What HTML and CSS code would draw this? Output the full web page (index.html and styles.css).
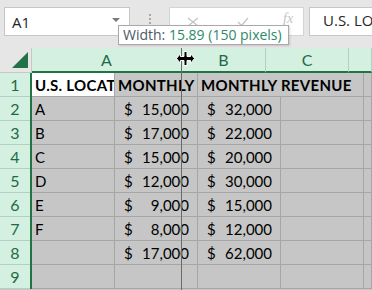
FILE: index.html
```html
<!DOCTYPE html>
<html lang="en">
<head>
    <meta charset="UTF-8">
    <title>Sheet - column width</title>
    <link rel="stylesheet" href="styles.css">
</head>
<body>
    <div class="app">
        <div class="formula-bar">
            <div class="name-box">
                <span>A1</span>
                <span class="caret"></span>
            </div>
            <div class="grip"><i></i><i></i><i></i></div>
            <div class="fx-buttons">
                <svg class="fx-icon" width="12" height="10" viewBox="0 0 12 10"><path d="M1 1 L11 9 M11 1 L1 9" stroke="#c4c4c4" stroke-width="1.3" fill="none"/></svg>
                <svg class="fx-icon" width="12" height="10" viewBox="0 0 12 10"><path d="M1 5 L4.5 8.5 L11 1" stroke="#c4c4c4" stroke-width="1.3" fill="none"/></svg>
                <span class="fx-label">fx</span>
            </div>
            <div class="formula-input">U.S. LOCATION</div>
        </div>

        <div class="col-headers">
            <div class="corner"><span class="corner-tri"></span></div>
            <div class="col-head">A</div>
            <div class="col-head">B</div>
            <div class="col-head">C</div>
            <div class="col-head"></div>
        </div>

        <div class="sheet">
            <div class="row-heads">
                <div class="row-head">1</div>
                <div class="row-head">2</div>
                <div class="row-head">3</div>
                <div class="row-head">4</div>
                <div class="row-head">5</div>
                <div class="row-head">6</div>
                <div class="row-head">7</div>
                <div class="row-head">8</div>
                <div class="row-head">9</div>
            </div>
            <div class="cells">
                <div class="cell active bold">U.S. LOCATION</div>
                <div class="cell bold">MONTHLY PROFIT</div>
                <div class="cell bold wide">MONTHLY REVENUE</div>
                <div class="cell"></div>

                <div class="cell">A</div>
                <div class="cell money"><span>$</span><span>15,000</span></div>
                <div class="cell money"><span>$</span><span>32,000</span></div>
                <div class="cell"></div>
                <div class="cell"></div>

                <div class="cell">B</div>
                <div class="cell money"><span>$</span><span>17,000</span></div>
                <div class="cell money"><span>$</span><span>22,000</span></div>
                <div class="cell"></div>
                <div class="cell"></div>

                <div class="cell">C</div>
                <div class="cell money"><span>$</span><span>15,000</span></div>
                <div class="cell money"><span>$</span><span>20,000</span></div>
                <div class="cell"></div>
                <div class="cell"></div>

                <div class="cell">D</div>
                <div class="cell money"><span>$</span><span>12,000</span></div>
                <div class="cell money"><span>$</span><span>30,000</span></div>
                <div class="cell"></div>
                <div class="cell"></div>

                <div class="cell">E</div>
                <div class="cell money"><span>$</span><span>9,000</span></div>
                <div class="cell money"><span>$</span><span>15,000</span></div>
                <div class="cell"></div>
                <div class="cell"></div>

                <div class="cell">F</div>
                <div class="cell money"><span>$</span><span>8,000</span></div>
                <div class="cell money"><span>$</span><span>12,000</span></div>
                <div class="cell"></div>
                <div class="cell"></div>

                <div class="cell"></div>
                <div class="cell money"><span>$</span><span>17,000</span></div>
                <div class="cell money"><span>$</span><span>62,000</span></div>
                <div class="cell"></div>
                <div class="cell"></div>

                <div class="cell"></div>
                <div class="cell"></div>
                <div class="cell"></div>
                <div class="cell"></div>
                <div class="cell"></div>
            </div>
        </div>

        <!-- column resize overlays -->
        <div class="drag-line"></div>
        <svg class="resize-cursor" width="19" height="15" viewBox="0 0 19 15">
            <path d="M8 0.5 H11 V5.5 H14.5 V2.5 L18.5 7.5 L14.5 12.5 V9.5 H11 V14.5 H8 V9.5 H4.5 V12.5 L0.5 7.5 L4.5 2.5 V5.5 H8 Z" fill="#000" stroke="#fff" stroke-width="1"/>
        </svg>
        <div class="tooltip"><span class="tip-key">Width:</span> <span class="tip-val">15.89 (150 pixels)</span></div>
    </div>
</body>
</html>
```

FILE: styles.css
```css
* {
    margin: 0;
    padding: 0;
    box-sizing: border-box;
}

body {
    width: 372px;
    height: 290px;
    overflow: hidden;
    background: #c6c6c6;
    font-family: 'Lato', 'Open Sans', sans-serif;
}

.app {
    position: relative;
    width: 372px;
    height: 290px;
    overflow: hidden;
}

/* formula bar */
.formula-bar {
    height: 48px;
    background: #e6e6e6;
    display: flex;
    align-items: flex-start;
    padding: 7px 0 0 4px;
    font-family: 'Open Sans', sans-serif;
}

.name-box {
    width: 126px;
    height: 29px;
    background: #fff;
    border: 1px solid #c6c6c6;
    display: flex;
    align-items: center;
    justify-content: space-between;
    padding: 0 9px 0 7px;
    font-size: 15px;
    color: #262626;
}

.caret {
    width: 0;
    height: 0;
    border-left: 4px solid transparent;
    border-right: 4px solid transparent;
    border-top: 4px solid #7a7a7a;
    margin-top: -3px;
}

.grip {
    width: 39px;
    display: flex;
    flex-direction: column;
    align-items: center;
    gap: 2px;
    padding-top: 7px;
}

.grip i {
    width: 2px;
    height: 2px;
    background: #a8a8a8;
}

.fx-buttons {
    width: 135px;
    height: 29px;
    background: #fff;
    border: 1px solid #d4d4d4;
    display: flex;
    align-items: center;
    padding: 0 0 0 17px;
    gap: 38px;
}

.fx-label {
    font-family: 'Liberation Serif', serif;
    font-style: italic;
    font-size: 14px;
    color: #c4c4c4;
    margin-top: -6px;
    margin-left: -4px;
}

.formula-input {
    flex: 1;
    height: 29px;
    margin-left: 5px;
    background: #fff;
    border: 1px solid #c6c6c6;
    border-right: none;
    padding: 2px 0 0 13px;
    font-size: 15px;
    color: #262626;
    white-space: nowrap;
    overflow: hidden;
}

/* column headers */
.col-headers {
    display: grid;
    grid-template-columns: 32px 150px 84px 83px 1fr;
    height: 25px;
}

.corner {
    background: #e6e6e6;
    border-right: 1px solid #c8c8c8;
    border-bottom: 1px solid #c8c8c8;
    position: relative;
}

.corner-tri {
    position: absolute;
    left: 12px;
    top: 4px;
    width: 0;
    height: 0;
    border-left: 16px solid transparent;
    border-bottom: 16px solid #217346;
}

.col-head {
    background: #d3f0e0;
    border-right: 1px solid #b3cfbf;
    border-bottom: 2px solid #217346;
    display: flex;
    align-items: center;
    justify-content: center;
    font-size: 16px;
    color: #1f6a46;
    padding-bottom: 1px;
}

/* grid */
.sheet {
    display: flex;
}

.row-heads {
    width: 32px;
    border-right: 2px solid #217346;
    background: #d3f0e0;
}

.row-head {
    height: 24px;
    border-bottom: 1px solid #b3cfbf;
    display: flex;
    align-items: center;
    justify-content: center;
    font-size: 16px;
    color: #1f6a46;
}

.cells {
    display: grid;
    grid-template-columns: 83px 83px 83px 83px 1fr;
    grid-auto-rows: 24px;
    flex: 1;
}

.cell {
    background: #c6c6c6;
    border-right: 1px solid #a6a6a6;
    border-bottom: 1px solid #a6a6a6;
    font-size: 15px;
    color: #000;
    display: flex;
    align-items: center;
    padding: 0 3px;
    white-space: nowrap;
    overflow: hidden;
}

.cell.active {
    background: #fff;
}

.cell.bold {
    font-weight: 700;
    letter-spacing: 0.3px;
}

.cell.wide {
    grid-column: span 2;
}

.cell.money {
    justify-content: space-between;
    padding: 0 8px 0 9px;
}

/* overlays for the column being resized */
.drag-line {
    position: absolute;
    left: 181px;
    top: 48px;
    bottom: 0;
    width: 1px;
    background: #6a6a6a;
}

.resize-cursor {
    position: absolute;
    left: 176px;
    top: 51px;
}

.tooltip {
    position: absolute;
    left: 118px;
    top: 25px;
    width: 171px;
    height: 20px;
    background: #fff;
    border: 1px solid #a9a9a9;
    box-shadow: 1px 1px 2px rgba(0, 0, 0, 0.15);
    font-family: 'Open Sans', sans-serif;
    font-size: 14px;
    line-height: 18px;
    padding-left: 4px;
    white-space: nowrap;
}

.tip-key {
    color: #4c5a6a;
}

.tip-val {
    color: #2c8a68;
}
```
